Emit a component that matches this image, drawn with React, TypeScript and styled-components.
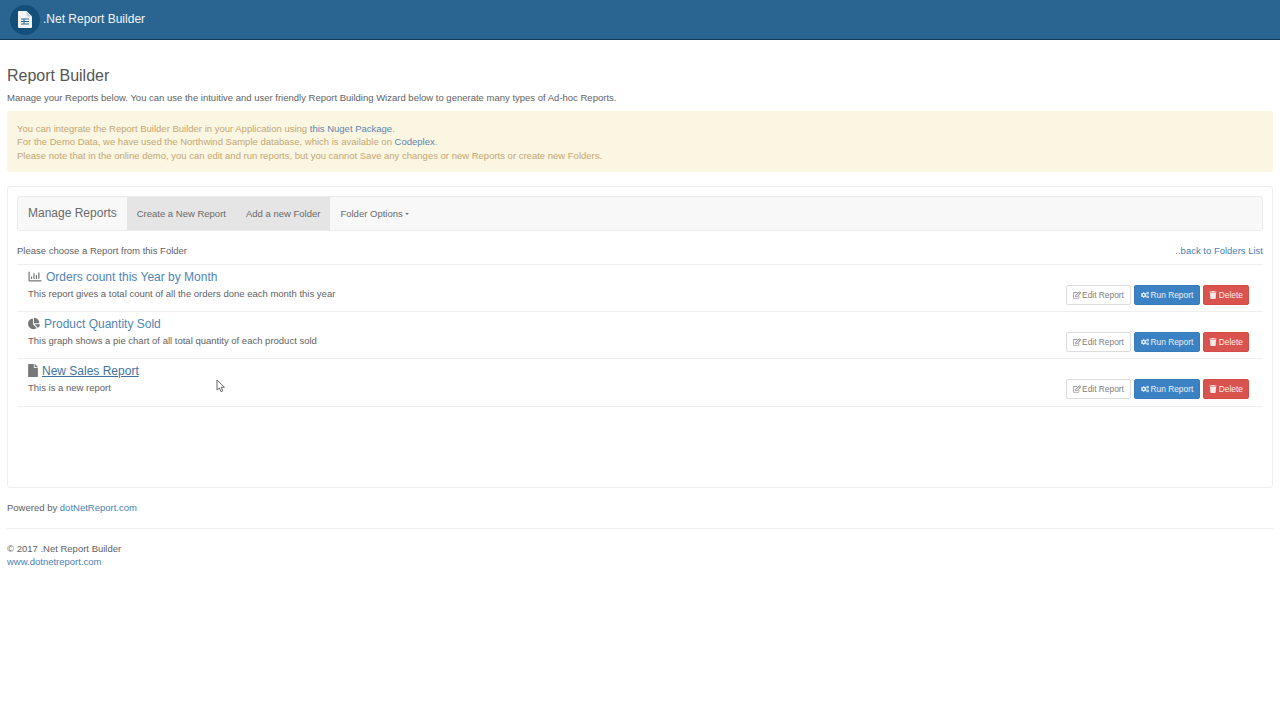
import React from "react";
import styled, { createGlobalStyle } from "styled-components";
import { FaRegChartBar, FaChartPie, FaFile, FaRegEdit, FaCogs, FaTrash } from "react-icons/fa";

const Global = createGlobalStyle`
  *, *::before, *::after { box-sizing: border-box; }
  html, body { margin: 0; padding: 0; background: #fff; }
  body { font-family: "Liberation Sans", Arial, sans-serif; font-size: 9.5px; line-height: 13.5px; color: #626262; }
  a { color: #4a7fb0; text-decoration: none; }
`;
const Shell = styled.div`position: relative; width: 1280px; height: 720px; overflow: hidden;`;
const TopBar = styled.header`
  height: 40px; background: #2a6592; border-bottom: 1px solid #17374f;
  display: flex; align-items: center; padding-left: 10px; gap: 4px;
`;
const LogoDisc = styled.div`
  width: 30px; height: 30px; border-radius: 50%; background: #134f78;
  display: flex; align-items: center; justify-content: center;
`;
const Brand = styled.span`color: #f1f5f8; font-size: 12px; margin-left: -1px;`;
const Main = styled.main`padding: 0 7px;`;
const Title = styled.h1`font-size: 16px; line-height: 18px; font-weight: 400; color: #555; margin: 27px 0 6px;`;
const Lead = styled.p`margin: 0 0 6px;`;
const Alert = styled.div`
  background: #fbf6e2; color: #c4a672; border-radius: 3px; padding: 11px 10px 0; height: 61px;
  a { color: #5d84ad; }
`;
const Panel = styled.section`
  margin-top: 14px; height: 302px; border: 1px solid #eee; border-radius: 3px; padding: 9px;
`;
const Nav = styled.nav`
  height: 35px; display: flex; align-items: stretch; background: #f8f8f8; border: 1px solid #ececec; border-radius: 3px;
`;
const NavBrand = styled.span`font-size: 12px; color: #6a6a6a; display: flex; align-items: center; padding: 1px 10px 0;`;
const NavItem = styled.span<{ $active?: boolean }>`
  display: flex; align-items: center; padding: 1px 10px 0; color: #6a6a6a;
  background: ${p => (p.$active ? "#e5e5e5" : "transparent")};
`;
const Caret = styled.i`
  display: inline-block; margin-left: 2px; border-top: 2px solid #777; border-left: 2px solid transparent; border-right: 2px solid transparent;
`;
const PickRow = styled.div`
  display: flex; justify-content: space-between; margin-top: 13px; height: 20px; align-items: flex-start;
`;
const ReportList = styled.div`border-top: 1px solid #eee;`;
const Row = styled.div`
  height: 47px; border-bottom: 1px solid #eee; padding: 0 14px 0 11px;
  display: flex; justify-content: space-between; align-items: flex-start;
  &:last-child { height: 48px; }
`;
const RowText = styled.div`padding-top: 4px;`;
const RowTitle = styled.div`
  font-size: 12px; line-height: 16px; display: flex; align-items: center; gap: 4px; margin-bottom: 2px;
`;
const IconSlot = styled.span<{ $w: number }>`
  display: flex; width: ${p => p.$w}px; color: #777;
  svg { width: 100%; height: 13px; }
`;
const TitleLink = styled.a<{ $hover?: boolean }>`
  color: ${p => (p.$hover ? "#3f72a0" : "#4f84b8")};
  text-decoration: ${p => (p.$hover ? "underline" : "none")};
`;
const Desc = styled.div`line-height: 13px;`;
const Actions = styled.div`display: flex; gap: 3px; padding-top: 20px;`;
const Btn = styled.button<{ $kind: "default" | "primary" | "danger" }>`
  height: 20px; padding: 0 ${p => (p.$kind === "danger" ? 5 : 6)}px; font: 8.4px "Liberation Sans", Arial, sans-serif; border-radius: 2px;
  display: flex; align-items: center; gap: 1.5px; border: 1px solid;
  svg { height: 8px; width: auto; }
  ${p => p.$kind === "default" && "background:#fff;border-color:#ddd;color:#808080;"}
  ${p => p.$kind === "primary" && "background:#3b82c4;border-color:#3b7cb8;color:#e8f0f8;"}
  ${p => p.$kind === "danger" && "background:#d9534f;border-color:#d44c48;color:#fbeaea;"}
`;
const PoweredBy = styled.p`margin: 13px 0 14px;`;
const Rule = styled.hr`border: 0; border-top: 1px solid #eee; margin: 0 0 13px;`;
const Footer = styled.footer`line-height: 13px;`;
const Cursor = styled.svg`position: absolute; left: 216px; top: 379px;`;

const reports = [
  { icon: <FaRegChartBar />, w: 14, title: "Orders count this Year by Month", desc: "This report gives a total count of all the orders done each month this year" },
  { icon: <FaChartPie />, w: 12, title: "Product Quantity Sold", desc: "This graph shows a pie chart of all total quantity of each product sold" },
  { icon: <FaFile />, w: 10, title: "New Sales Report", desc: "This is a new report", hover: true },
];

export default function App() {
  return (
    <Shell>
      <Global />
      <TopBar>
        <LogoDisc>
          <svg width="14" height="17" viewBox="0 0 14 17">
            <path d="M1 0 H8.5 L14 5.5 V16 a1 1 0 0 1 -1 1 H1 a1 1 0 0 1 -1 -1 V1 a1 1 0 0 1 1 -1 Z" fill="#f2f6f9" />
            <path d="M8.5 0 V5.5 H14 Z" fill="#c5d6e2" />
            <path d="M3 8 H11 M3 10.5 H11 M3 13 H11 M6 8 V13" stroke="#2a6592" strokeWidth="1" fill="none" />
          </svg>
        </LogoDisc>
        <Brand>.Net Report Builder</Brand>
      </TopBar>
      <Main>
        <Title>Report Builder</Title>
        <Lead>Manage your Reports below. You can use the intuitive and user friendly Report Building Wizard below to generate many types of Ad-hoc Reports.</Lead>
        <Alert>
          You can integrate the Report Builder Builder in your Application using <a>this Nuget Package</a>.<br />
          For the Demo Data, we have used the Northwind Sample database, which is available on <a>Codeplex</a>.<br />
          Please note that in the online demo, you can edit and run reports, but you cannot Save any changes or new Reports or create new Folders.
        </Alert>
        <Panel>
          <Nav>
            <NavBrand>Manage Reports</NavBrand>
            <NavItem $active>Create a New Report</NavItem>
            <NavItem $active>Add a new Folder</NavItem>
            <NavItem>Folder Options<Caret /></NavItem>
          </Nav>
          <PickRow>
            <span>Please choose a Report from this Folder</span>
            <a>..back to Folders List</a>
          </PickRow>
          <ReportList>
            {reports.map(r => (
              <Row key={r.title}>
                <RowText>
                  <RowTitle>
                    <IconSlot $w={r.w}>{r.icon}</IconSlot>
                    <TitleLink $hover={r.hover}>{r.title}</TitleLink>
                  </RowTitle>
                  <Desc>{r.desc}</Desc>
                </RowText>
                <Actions>
                  <Btn $kind="default"><FaRegEdit />Edit Report</Btn>
                  <Btn $kind="primary"><FaCogs />Run Report</Btn>
                  <Btn $kind="danger"><FaTrash />Delete</Btn>
                </Actions>
              </Row>
            ))}
          </ReportList>
        </Panel>
        <PoweredBy>Powered by <a>dotNetReport.com</a></PoweredBy>
        <Rule />
        <Footer>© 2017 .Net Report Builder<br /><a>www.dotnetreport.com</a></Footer>
      </Main>
      <Cursor width="10" height="14" viewBox="0 0 10 14">
        <path d="M1 1 L1 11 L3.4 9 L5 12.6 L6.8 11.8 L5.2 8.4 L8.4 8.2 Z" fill="#fff" stroke="#555" strokeWidth="0.9" />
      </Cursor>
    </Shell>
  );
}
